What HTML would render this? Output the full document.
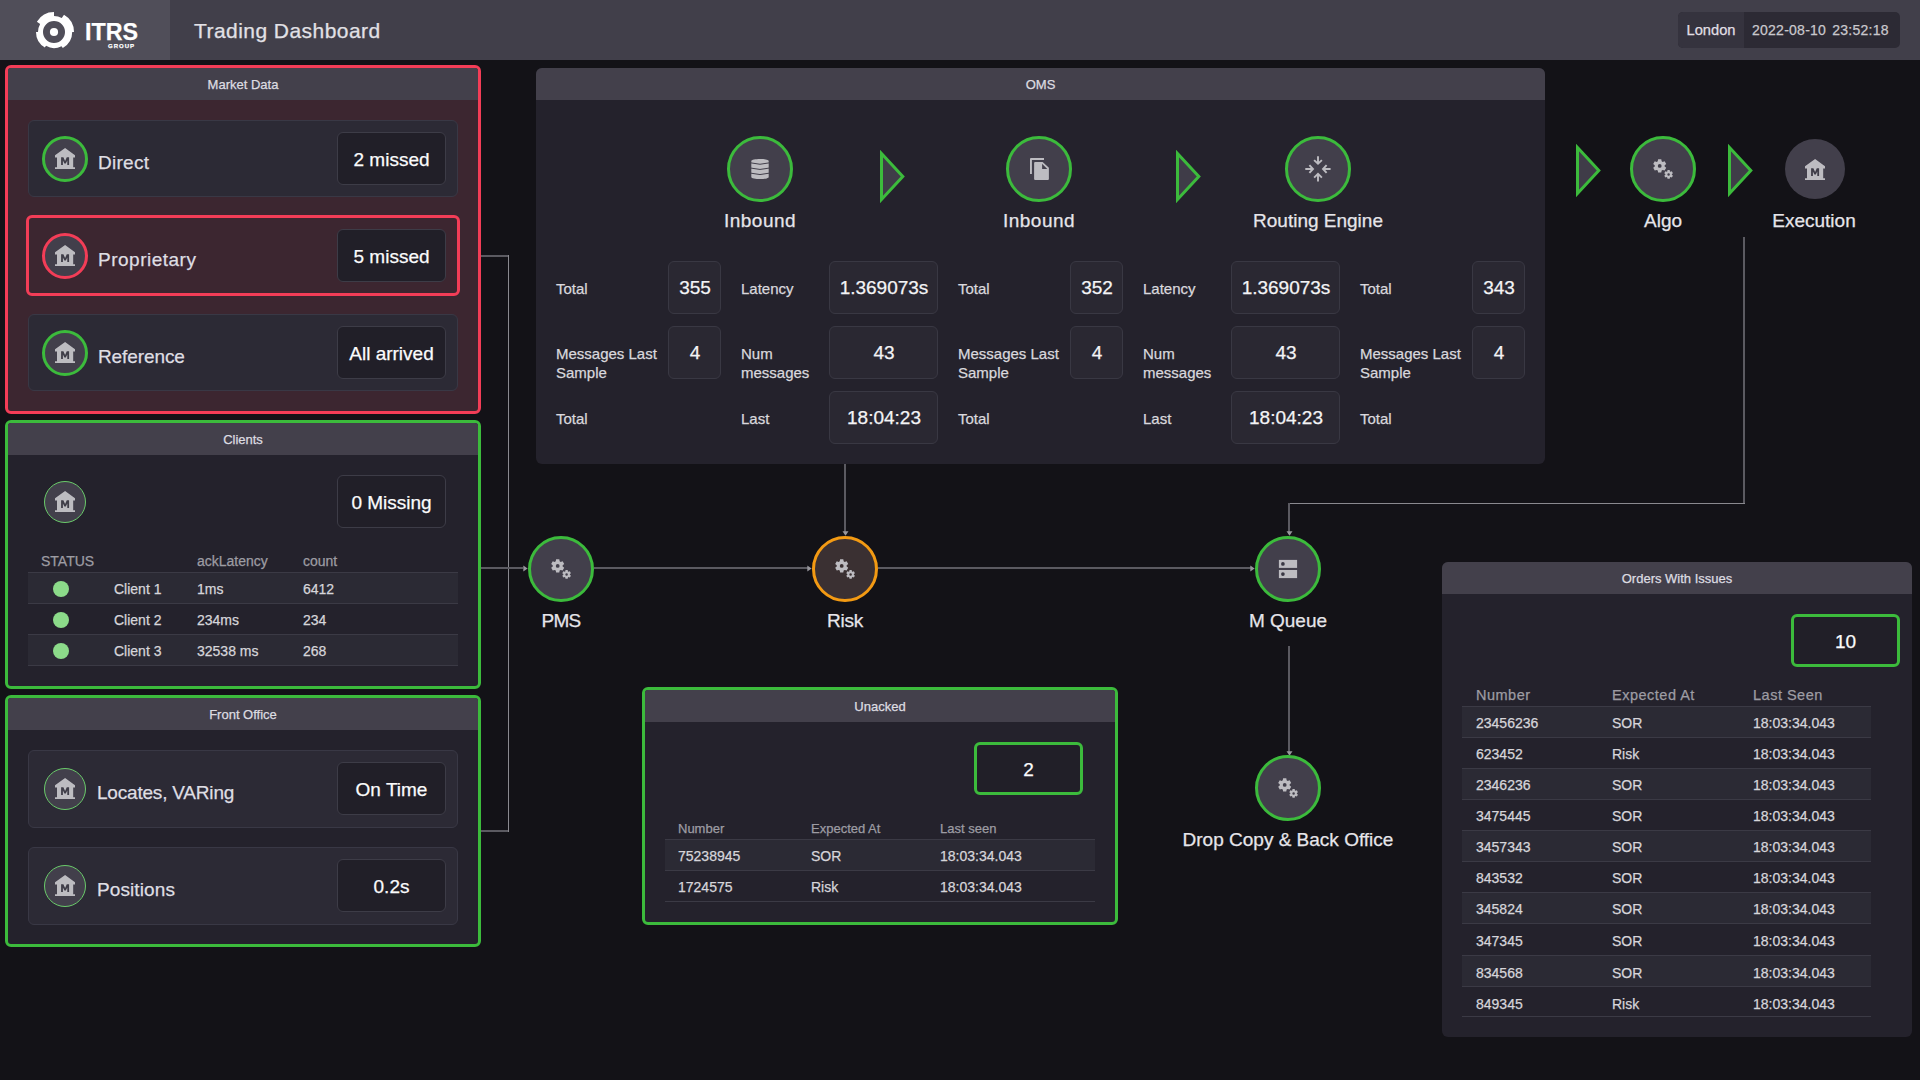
<!DOCTYPE html><html><head><meta charset="utf-8"><style>
*{box-sizing:border-box;margin:0;padding:0}
html,body{width:1920px;height:1080px;overflow:hidden;background:#131217;font-family:"Liberation Sans",sans-serif;color:#e4e3e8}
div{-webkit-text-stroke:0.25px currentColor}
.a{position:absolute}
.panel{position:absolute;border-radius:6px;overflow:hidden;background:#24222c}
.ph{position:absolute;left:0;right:0;top:0;height:32px;background:#43404b;font-size:13px;line-height:34px;text-align:center;color:#dddce1;white-space:nowrap}
.card{position:absolute;border-radius:6px;background:#2c2a35;border:1px solid #393845}
.vbox{position:absolute;padding-top:1px;border-radius:6px;background:#211f28;border:1px solid #3d3c47;font-size:19px;text-align:center;color:#fbfbfc;white-space:nowrap}
.circ{position:absolute;border-radius:50%;background:#423f4b}
.lbl{position:absolute;font-size:19px;color:#dfdee3;white-space:nowrap}
.nl{position:absolute;font-size:19px;color:#e6e5ea;white-space:nowrap;text-align:center}
.ln{position:absolute;background:#727178}
.ob{position:absolute;padding-left:1px;border-radius:6px;background:#2a2832;border:1px solid #393843;font-size:19px;text-align:center;color:#f4f4f6;white-space:nowrap;height:53px;line-height:51px}
.ol{position:absolute;font-size:15px;color:#d9d8dd;line-height:19px;white-space:nowrap}
.tr{position:absolute;border-bottom:1px solid #3b3a45}
.tt{position:absolute;font-size:15px;color:#d6d5da;white-space:nowrap}
.th{position:absolute;font-size:15px;color:#9d9ca3;white-space:nowrap}
</style></head><body>
<svg width="0" height="0" style="position:absolute"><defs>
<symbol id="bank" viewBox="0 0 20.2 21.1">
<path fill="#bdbcc1" d="M10.1 0 L20.2 7.3 L20.2 9.5 L18.2 9.5 L18.2 19.2 L20.2 19.2 L20.2 21.1 L0 21.1 L0 19.2 L2 19.2 L2 9.5 L0 9.5 L0 7.3 Z"/>
<path fill="#3f3d48" d="M6.1 17.1 V9.2 H8.4 L10.1 13.1 L11.8 9.2 H14.1 V17.1 H12.3 V12.4 L10.8 15.6 H9.4 L7.9 12.4 V17.1 Z"/>
</symbol>
<symbol id="gears" viewBox="0 0 32 32"><path fill-rule="evenodd" fill="#bdbcc1" d="M10.75 8.29 L11.11 6.29 L14.29 6.29 L14.65 8.29 L15.71 8.91 L17.63 8.22 L19.22 10.97 L17.66 12.28 L17.66 13.52 L19.22 14.83 L17.63 17.58 L15.71 16.89 L14.65 17.51 L14.29 19.51 L11.11 19.51 L10.75 17.51 L9.69 16.89 L7.77 17.58 L6.18 14.83 L7.74 13.52 L7.74 12.28 L6.18 10.97 L7.77 8.22 L9.69 8.91Z M14.60 12.90 A1.9 1.9 0 1 0 10.80 12.90 A1.9 1.9 0 1 0 14.60 12.90Z M20.26 18.38 L20.51 17.03 L22.69 17.03 L22.94 18.38 L23.55 18.73 L24.84 18.27 L25.93 20.16 L24.88 21.05 L24.88 21.75 L25.93 22.64 L24.84 24.53 L23.55 24.07 L22.94 24.42 L22.69 25.77 L20.51 25.77 L20.26 24.42 L19.65 24.07 L18.36 24.53 L17.27 22.64 L18.32 21.75 L18.32 21.05 L17.27 20.16 L18.36 18.27 L19.65 18.73Z M22.85 21.40 A1.25 1.25 0 1 0 20.35 21.40 A1.25 1.25 0 1 0 22.85 21.40Z"/></symbol>
<symbol id="db" viewBox="0 0 32 32">
<path fill="#bdbcc1" d="M7.3 8 C7.3 5.2 24.7 5.2 24.7 8 V24 C24.7 26.8 7.3 26.8 7.3 24 Z"/>
<g fill="none" stroke="#423f4b" stroke-width="1"><path d="M7 9.9 Q16 12.6 25 9.9"/><path d="M7 15.1 Q16 17.8 25 15.1"/><path d="M7 20.2 Q16 22.9 25 20.2"/></g>
</symbol>
<symbol id="copy" viewBox="0 0 32 32">
<path fill="#bdbcc1" d="M8 5 H21 V7 H8.9 V20.9 H7 V6 Q7 5 8 5Z"/>
<path fill="#bdbcc1" d="M12.1 9 H19.6 L25.9 14.8 V26 Q25.9 27 24.9 27 H12.1 Q11.1 27 11.1 26 V10 Q11.1 9 12.1 9Z"/>
<path fill="#423f4b" d="M19.1 10.8 V16 H24.3Z"/>
</symbol>
<symbol id="compress" viewBox="0 0 32 32">
<g fill="none" stroke="#bdbcc1" stroke-width="1.9" stroke-linecap="butt" stroke-linejoin="miter">
<path d="M16 3.3 V10.5 M12.1 7.1 L16 10.7 L19.9 7.1"/>
<path d="M16 28.4 V21 M12.1 24.6 L16 20.9 L19.9 24.6"/>
<path d="M3.3 16 H10.7 M7.4 12.1 L11 16 L7.4 19.9"/>
<path d="M28.6 16 H21 M24.6 12.1 L21 16 L24.6 19.9"/>
</g>
</symbol>
<symbol id="server" viewBox="0 0 32 32">
<g fill="#bdbcc1"><rect x="6.9" y="6.9" width="18.2" height="8"/><rect x="6.9" y="17" width="18.2" height="8.1"/></g>
<g fill="#3a3844"><circle cx="10.9" cy="10.9" r="1.85"/><circle cx="10.9" cy="21.1" r="1.85"/></g>
</symbol>
</defs></svg>
<div class="a" style="left:0;top:0;width:1920px;height:60px;background:#413f4a"></div>
<div class="a" style="left:0;top:0;width:170px;height:60px;background:#504e59"></div>
<svg class="a" style="left:32px;top:8px" width="46" height="44" viewBox="0 0 46 44">
<path fill="#ffffff" fill-rule="evenodd" d="M22.00 8.00 A16 16 0 0 1 29.76 10.01 L32.00 6.68 A20 20 0 0 1 42.00 24.00 L40.20 24.00 A18.2 18.2 0 0 1 30.82 39.92 L29.51 38.13 A16 16 0 0 1 14.00 37.86 L12.86 39.51 A18 18 0 0 1 4.00 24.00 L6.00 24.00 A16 16 0 0 1 8.14 16.00 L4.86 13.70 A20 20 0 0 1 22.00 4.00 Z M33.0 24.0 A11 11 0 1 0 11.0 24.0 A11 11 0 1 0 33.0 24.0Z"/>
<circle cx="22" cy="24" r="4.1" fill="#ffffff"/>
</svg>
<div class="a" style="left:85px;top:18px;font-size:24px;font-weight:bold;color:#fff;line-height:28px;transform:scaleX(0.97);transform-origin:0 0">ITRS</div>
<div class="a" style="left:108px;top:43px;font-size:6px;font-weight:bold;color:#fff;letter-spacing:1px;line-height:7px">GROUP</div>
<div class="a" style="left:194px;top:17px;font-size:21px;letter-spacing:0.45px;line-height:28px;color:#e2e1e6;white-space:nowrap">Trading Dashboard</div>
<div class="a" style="left:1678px;top:12px;width:222px;height:36px;border-radius:5px;background:#2c2a34;overflow:hidden"><div class="a" style="left:0;top:0;width:66px;height:36px;background:#35333e;font-size:14.7px;line-height:37px;text-align:center;color:#e0dfe4">London</div><div class="a" style="left:74px;top:0;font-size:14px;line-height:36px;color:#c9c8cd;white-space:nowrap;word-spacing:2px;letter-spacing:0.25px">2022-08-10 23:52:18</div></div>
<div class="panel" style="left:5px;top:65px;width:476px;height:349px;background:#3c2630;border:3px solid #f33d57;"><div class="ph" style="height:32px;line-height:34px">Market Data</div></div>
<div class="card" style="left:28px;top:120px;width:430px;height:77px;background:#2c2a35"></div>
<div class="circ" style="left:42.0px;top:136.0px;width:46px;height:46px;background:#423f4b;border:3px solid #3cbb3c;"></div>
<svg class="a" style="left:54.9px;top:148.14999999999998px" width="20.2" height="21.1" viewBox="0 0 20.2 21.1"><use href="#bank"/></svg>
<div class="lbl" style="left:98px;top:152px;line-height:22px;letter-spacing:0.28px">Direct</div>
<div class="vbox" style="left:337px;top:132px;width:109px;height:53px;line-height:51px;">2 missed</div>
<div class="card" style="left:26px;top:215px;width:434px;height:81px;border:3px solid #f33d57;background:#3c2630"></div>
<div class="circ" style="left:42.0px;top:233.0px;width:46px;height:46px;background:#423f4b;border:3px solid #f33d57;"></div>
<svg class="a" style="left:54.9px;top:245.14999999999998px" width="20.2" height="21.1" viewBox="0 0 20.2 21.1"><use href="#bank"/></svg>
<div class="lbl" style="left:98px;top:249px;line-height:22px;letter-spacing:0.5px">Proprietary</div>
<div class="vbox" style="left:337px;top:229px;width:109px;height:53px;line-height:51px;">5 missed</div>
<div class="card" style="left:28px;top:314px;width:430px;height:77px;background:#2c2a35"></div>
<div class="circ" style="left:42.0px;top:330.0px;width:46px;height:46px;background:#423f4b;border:3px solid #3cbb3c;"></div>
<svg class="a" style="left:54.9px;top:342.15px" width="20.2" height="21.1" viewBox="0 0 20.2 21.1"><use href="#bank"/></svg>
<div class="lbl" style="left:98px;top:346px;line-height:22px;letter-spacing:-0.1px">Reference</div>
<div class="vbox" style="left:337px;top:326px;width:109px;height:53px;line-height:51px;">All arrived</div>
<div class="panel" style="left:5px;top:420px;width:476px;height:269px;background:#24222c;border:3px solid #3cbb3c;"><div class="ph" style="height:32px;line-height:34px">Clients</div></div>
<div class="circ" style="left:44.0px;top:481.0px;width:42px;height:42px;background:#423f4b;border:1.5px solid #6acb6a;"></div>
<svg class="a" style="left:54.9px;top:491.15px" width="20.2" height="21.1" viewBox="0 0 20.2 21.1"><use href="#bank"/></svg>
<div class="vbox" style="left:337px;top:475px;width:109px;height:53px;line-height:51px;">0 Missing</div>
<div class="th" style="left:41px;top:553px;font-size:14px">STATUS</div>
<div class="th" style="left:197px;top:553px;font-size:14px">ackLatency</div>
<div class="th" style="left:303px;top:553px;font-size:14px">count</div>
<div class="a" style="left:28px;top:572px;width:430px;height:1px;background:#3b3a45"></div>
<div class="a" style="left:28px;top:573px;width:430px;height:30px;background:#2b2a34;border-bottom:1px solid #3b3a45;height:31px"></div>
<div class="a" style="left:53px;top:581px;width:16px;height:16px;border-radius:50%;background:#8cdb8a"></div>
<div class="tt" style="left:114px;top:581px;font-size:14px">Client 1</div>
<div class="tt" style="left:197px;top:581px;font-size:14px">1ms</div>
<div class="tt" style="left:303px;top:581px;font-size:14px">6412</div>
<div class="a" style="left:28px;top:604px;width:430px;height:30px;background:#24222c;border-bottom:1px solid #3b3a45;height:31px"></div>
<div class="a" style="left:53px;top:612px;width:16px;height:16px;border-radius:50%;background:#8cdb8a"></div>
<div class="tt" style="left:114px;top:612px;font-size:14px">Client 2</div>
<div class="tt" style="left:197px;top:612px;font-size:14px">234ms</div>
<div class="tt" style="left:303px;top:612px;font-size:14px">234</div>
<div class="a" style="left:28px;top:635px;width:430px;height:30px;background:#2b2a34;border-bottom:1px solid #3b3a45;height:31px"></div>
<div class="a" style="left:53px;top:643px;width:16px;height:16px;border-radius:50%;background:#8cdb8a"></div>
<div class="tt" style="left:114px;top:643px;font-size:14px">Client 3</div>
<div class="tt" style="left:197px;top:643px;font-size:14px">32538 ms</div>
<div class="tt" style="left:303px;top:643px;font-size:14px">268</div>
<div class="panel" style="left:5px;top:695px;width:476px;height:252px;background:#24222c;border:3px solid #3cbb3c;"><div class="ph" style="height:32px;line-height:34px">Front Office</div></div>
<div class="card" style="left:28px;top:750px;width:430px;height:78px;background:#2c2a35"></div>
<div class="circ" style="left:44.0px;top:768.0px;width:42px;height:42px;background:#423f4b;border:1.5px solid #6acb6a;"></div>
<svg class="a" style="left:54.9px;top:778.1500000000001px" width="20.2" height="21.1" viewBox="0 0 20.2 21.1"><use href="#bank"/></svg>
<div class="lbl" style="left:97px;top:782px;line-height:22px;letter-spacing:-0.2px">Locates, VARing</div>
<div class="vbox" style="left:337px;top:762px;width:109px;height:53px;line-height:51px;">On Time</div>
<div class="card" style="left:28px;top:847px;width:430px;height:78px;background:#2c2a35"></div>
<div class="circ" style="left:44.0px;top:865.0px;width:42px;height:42px;background:#423f4b;border:1.5px solid #6acb6a;"></div>
<svg class="a" style="left:54.9px;top:875.1500000000001px" width="20.2" height="21.1" viewBox="0 0 20.2 21.1"><use href="#bank"/></svg>
<div class="lbl" style="left:97px;top:879px;line-height:22px;letter-spacing:0.1px">Positions</div>
<div class="vbox" style="left:337px;top:859px;width:109px;height:53px;line-height:51px;">0.2s</div>
<div class="a" style="left:481px;top:255px;width:27px;height:2px;background:#5b5a61"></div>
<div class="a" style="left:508px;top:255px;width:1px;height:577px;background:#8a898f"></div>
<div class="a" style="left:481px;top:830px;width:27px;height:2px;background:#5b5a61"></div>
<div class="a" style="left:481px;top:567px;width:42px;height:2px;background:#5b5a61"></div>
<div class="panel" style="left:536px;top:68px;width:1009px;height:396px;background:#24222c"><div class="ph">OMS</div></div>
<div class="circ" style="left:727.0px;top:136.0px;width:66px;height:66px;background:#423f4b;border:3px solid #3cbb3c;"></div>
<svg class="a" style="left:744.0px;top:153.0px" width="32" height="32" viewBox="0 0 32 32"><use href="#db"/></svg>
<div class="nl" style="left:660px;top:209px;width:200px;line-height:24px;letter-spacing:0.5px">Inbound</div>
<svg class="a" style="left:880px;top:146px" width="27" height="60" viewBox="0 0 27 60"><path d="M1.5 7.6 L22.8 30.4 L1.5 53.4 Z" fill="#3f3c48" stroke="#3cbb3c" stroke-width="3" stroke-linejoin="miter" stroke-miterlimit="10"/></svg>
<div class="circ" style="left:1006.0px;top:136.0px;width:66px;height:66px;background:#423f4b;border:3px solid #3cbb3c;"></div>
<svg class="a" style="left:1023.0px;top:153.0px" width="32" height="32" viewBox="0 0 32 32"><use href="#copy"/></svg>
<div class="nl" style="left:939px;top:209px;width:200px;line-height:24px;letter-spacing:0.5px">Inbound</div>
<svg class="a" style="left:1176px;top:146px" width="27" height="60" viewBox="0 0 27 60"><path d="M1.5 7.6 L22.8 30.4 L1.5 53.4 Z" fill="#3f3c48" stroke="#3cbb3c" stroke-width="3" stroke-linejoin="miter" stroke-miterlimit="10"/></svg>
<div class="circ" style="left:1285.0px;top:136.0px;width:66px;height:66px;background:#423f4b;border:3px solid #3cbb3c;"></div>
<svg class="a" style="left:1302.0px;top:153.0px" width="32" height="32" viewBox="0 0 32 32"><use href="#compress"/></svg>
<div class="nl" style="left:1218px;top:209px;width:200px;line-height:24px">Routing Engine</div>
<svg class="a" style="left:1576px;top:140px" width="27" height="60" viewBox="0 0 27 60"><path d="M1.5 7.6 L22.8 30.4 L1.5 53.4 Z" fill="#3f3c48" stroke="#3cbb3c" stroke-width="3" stroke-linejoin="miter" stroke-miterlimit="10"/></svg>
<div class="circ" style="left:1630.0px;top:136.0px;width:66px;height:66px;background:#423f4b;border:3px solid #3cbb3c;"></div>
<svg class="a" style="left:1647.0px;top:153.0px" width="32" height="32" viewBox="0 0 32 32"><use href="#gears"/></svg>
<div class="nl" style="left:1563px;top:209px;width:200px;line-height:24px">Algo</div>
<svg class="a" style="left:1728px;top:140px" width="27" height="60" viewBox="0 0 27 60"><path d="M1.5 7.6 L22.8 30.4 L1.5 53.4 Z" fill="#3f3c48" stroke="#3cbb3c" stroke-width="3" stroke-linejoin="miter" stroke-miterlimit="10"/></svg>
<div class="circ" style="left:1785.0px;top:139.0px;width:60px;height:60px;background:#423f4b;"></div>
<svg class="a" style="left:1804.9px;top:158.89999999999998px" width="20.2" height="21.1" viewBox="0 0 20.2 21.1"><use href="#bank"/></svg>
<div class="nl" style="left:1714px;top:209px;width:200px;line-height:24px">Execution</div>
<div class="ol" style="left:556px;top:279px">Total</div>
<div class="ob" style="left:668px;top:261px;width:53px">355</div>
<div class="ol" style="left:556px;top:344px">Messages Last<br>Sample</div>
<div class="ob" style="left:668px;top:326px;width:53px">4</div>
<div class="ol" style="left:556px;top:409px">Total</div>
<div class="ol" style="left:741px;top:279px">Latency</div>
<div class="ob" style="left:829px;top:261px;width:109px">1.369073s</div>
<div class="ol" style="left:741px;top:344px">Num<br>messages</div>
<div class="ob" style="left:829px;top:326px;width:109px">43</div>
<div class="ol" style="left:741px;top:409px">Last</div>
<div class="ob" style="left:829px;top:391px;width:109px">18:04:23</div>
<div class="ol" style="left:958px;top:279px">Total</div>
<div class="ob" style="left:1070px;top:261px;width:53px">352</div>
<div class="ol" style="left:958px;top:344px">Messages Last<br>Sample</div>
<div class="ob" style="left:1070px;top:326px;width:53px">4</div>
<div class="ol" style="left:958px;top:409px">Total</div>
<div class="ol" style="left:1143px;top:279px">Latency</div>
<div class="ob" style="left:1231px;top:261px;width:109px">1.369073s</div>
<div class="ol" style="left:1143px;top:344px">Num<br>messages</div>
<div class="ob" style="left:1231px;top:326px;width:109px">43</div>
<div class="ol" style="left:1143px;top:409px">Last</div>
<div class="ob" style="left:1231px;top:391px;width:109px">18:04:23</div>
<div class="ol" style="left:1360px;top:279px">Total</div>
<div class="ob" style="left:1472px;top:261px;width:53px">343</div>
<div class="ol" style="left:1360px;top:344px">Messages Last<br>Sample</div>
<div class="ob" style="left:1472px;top:326px;width:53px">4</div>
<div class="ol" style="left:1360px;top:409px">Total</div>
<div class="a" style="left:844px;top:464px;width:2px;height:68px;background:#5b5a61"></div>
<div class="a" style="left:594px;top:567px;width:214px;height:2px;background:#5b5a61"></div>
<div class="a" style="left:878px;top:567px;width:373px;height:2px;background:#5b5a61"></div>
<div class="a" style="left:1743px;top:237px;width:2px;height:266px;background:#5b5a61"></div>
<div class="a" style="left:1288px;top:503px;width:457px;height:1px;background:#8a898f"></div>
<div class="a" style="left:1288px;top:503px;width:2px;height:31px;background:#5b5a61"></div>
<div class="a" style="left:1288px;top:646px;width:2px;height:106px;background:#5b5a61"></div>
<svg class="a" style="left:523px;top:564.5px" width="5" height="7" viewBox="0 0 5 7"><path d="M0.3 0.5L4.7 3.5L0.3 6.5Z" fill="#98979d"/></svg>
<svg class="a" style="left:807px;top:564.5px" width="5" height="7" viewBox="0 0 5 7"><path d="M0.3 0.5L4.7 3.5L0.3 6.5Z" fill="#98979d"/></svg>
<svg class="a" style="left:1250px;top:564.5px" width="5" height="7" viewBox="0 0 5 7"><path d="M0.3 0.5L4.7 3.5L0.3 6.5Z" fill="#98979d"/></svg>
<svg class="a" style="left:841.5px;top:531px" width="7" height="5" viewBox="0 0 7 5"><path d="M0.5 0.3L6.5 0.3L3.5 4.7Z" fill="#98979d"/></svg>
<svg class="a" style="left:1285.5px;top:531px" width="7" height="5" viewBox="0 0 7 5"><path d="M0.5 0.3L6.5 0.3L3.5 4.7Z" fill="#98979d"/></svg>
<svg class="a" style="left:1285.5px;top:751px" width="7" height="5" viewBox="0 0 7 5"><path d="M0.5 0.3L6.5 0.3L3.5 4.7Z" fill="#98979d"/></svg>
<div class="circ" style="left:528.0px;top:536.0px;width:66px;height:66px;background:#423f4b;border:3px solid #3cbb3c;"></div>
<svg class="a" style="left:545.0px;top:553.0px" width="32" height="32" viewBox="0 0 32 32"><use href="#gears"/></svg>
<div class="nl" style="left:461px;top:608.5px;width:200px;line-height:24px;letter-spacing:-0.7px">PMS</div>
<div class="circ" style="left:812.0px;top:536.0px;width:66px;height:66px;background:#3a3032;border:3px solid #f39a13;"></div>
<svg class="a" style="left:829.0px;top:553.0px" width="32" height="32" viewBox="0 0 32 32"><use href="#gears"/></svg>
<div class="nl" style="left:745px;top:608.5px;width:200px;line-height:24px;letter-spacing:-0.27px">Risk</div>
<div class="circ" style="left:1255.0px;top:536.0px;width:66px;height:66px;background:#423f4b;border:3px solid #3cbb3c;"></div>
<svg class="a" style="left:1272.0px;top:553.0px" width="32" height="32" viewBox="0 0 32 32"><use href="#server"/></svg>
<div class="nl" style="left:1188px;top:608.5px;width:200px;line-height:24px">M Queue</div>
<div class="circ" style="left:1255.0px;top:755.0px;width:66px;height:66px;background:#423f4b;border:3px solid #3cbb3c;"></div>
<svg class="a" style="left:1272.0px;top:772.0px" width="32" height="32" viewBox="0 0 32 32"><use href="#gears"/></svg>
<div class="nl" style="left:1138px;top:827.5px;width:300px;line-height:24px">Drop Copy &amp; Back Office</div>
<div class="panel" style="left:642px;top:687px;width:476px;height:238px;background:#24222c;border:3px solid #3cbb3c;"><div class="ph" style="height:32px;line-height:34px">Unacked</div></div>
<div class="vbox" style="left:974px;top:742px;width:109px;height:53px;line-height:47px;border:3px solid #3cbb3c;">2</div>
<div class="th" style="left:678px;top:821px;font-size:13px">Number</div>
<div class="th" style="left:811px;top:821px;font-size:13px">Expected At</div>
<div class="th" style="left:940px;top:821px;font-size:13px">Last seen</div>
<div class="a" style="left:665px;top:839px;width:430px;height:1px;background:#3b3a45"></div>
<div class="a" style="left:665px;top:840px;width:430px;height:31px;background:#2b2a34;border-bottom:1px solid #3b3a45"></div>
<div class="tt" style="left:678px;top:848px;font-size:14px">75238945</div>
<div class="tt" style="left:811px;top:848px;font-size:14px">SOR</div>
<div class="tt" style="left:940px;top:848px;font-size:14px">18:03:34.043</div>
<div class="a" style="left:665px;top:871px;width:430px;height:31px;background:#24222c;border-bottom:1px solid #3b3a45"></div>
<div class="tt" style="left:678px;top:879px;font-size:14px">1724575</div>
<div class="tt" style="left:811px;top:879px;font-size:14px">Risk</div>
<div class="tt" style="left:940px;top:879px;font-size:14px">18:03:34.043</div>
<div class="panel" style="left:1442px;top:562px;width:470px;height:475px;background:#24222c"><div class="ph">Orders With Issues</div></div>
<div class="vbox" style="left:1791px;top:614px;width:109px;height:53px;line-height:47px;border:3px solid #3cbb3c;">10</div>
<div class="th" style="left:1476px;top:687px;font-size:14.5px;letter-spacing:0.5px">Number</div>
<div class="th" style="left:1612px;top:687px;font-size:14.5px;letter-spacing:0.5px">Expected At</div>
<div class="th" style="left:1753px;top:687px;font-size:14.5px;letter-spacing:0.5px">Last Seen</div>
<div class="a" style="left:1462px;top:706px;width:409px;height:1px;background:#3b3a45"></div>
<div class="a" style="left:1462px;top:707px;width:409px;height:31px;background:#2b2a34;border-bottom:1px solid #3b3a45"></div>
<div class="tt" style="left:1476px;top:715px;font-size:14px">23456236</div>
<div class="tt" style="left:1612px;top:715px;font-size:14px">SOR</div>
<div class="tt" style="left:1753px;top:715px;font-size:14px">18:03:34.043</div>
<div class="a" style="left:1462px;top:738px;width:409px;height:31px;background:#24222c;border-bottom:1px solid #3b3a45"></div>
<div class="tt" style="left:1476px;top:746px;font-size:14px">623452</div>
<div class="tt" style="left:1612px;top:746px;font-size:14px">Risk</div>
<div class="tt" style="left:1753px;top:746px;font-size:14px">18:03:34.043</div>
<div class="a" style="left:1462px;top:769px;width:409px;height:31px;background:#2b2a34;border-bottom:1px solid #3b3a45"></div>
<div class="tt" style="left:1476px;top:777px;font-size:14px">2346236</div>
<div class="tt" style="left:1612px;top:777px;font-size:14px">SOR</div>
<div class="tt" style="left:1753px;top:777px;font-size:14px">18:03:34.043</div>
<div class="a" style="left:1462px;top:800px;width:409px;height:31px;background:#24222c;border-bottom:1px solid #3b3a45"></div>
<div class="tt" style="left:1476px;top:808px;font-size:14px">3475445</div>
<div class="tt" style="left:1612px;top:808px;font-size:14px">SOR</div>
<div class="tt" style="left:1753px;top:808px;font-size:14px">18:03:34.043</div>
<div class="a" style="left:1462px;top:831px;width:409px;height:31px;background:#2b2a34;border-bottom:1px solid #3b3a45"></div>
<div class="tt" style="left:1476px;top:839px;font-size:14px">3457343</div>
<div class="tt" style="left:1612px;top:839px;font-size:14px">SOR</div>
<div class="tt" style="left:1753px;top:839px;font-size:14px">18:03:34.043</div>
<div class="a" style="left:1462px;top:862px;width:409px;height:31px;background:#24222c;border-bottom:1px solid #3b3a45"></div>
<div class="tt" style="left:1476px;top:870px;font-size:14px">843532</div>
<div class="tt" style="left:1612px;top:870px;font-size:14px">SOR</div>
<div class="tt" style="left:1753px;top:870px;font-size:14px">18:03:34.043</div>
<div class="a" style="left:1462px;top:893px;width:409px;height:31px;background:#2b2a34;border-bottom:1px solid #3b3a45"></div>
<div class="tt" style="left:1476px;top:901px;font-size:14px">345824</div>
<div class="tt" style="left:1612px;top:901px;font-size:14px">SOR</div>
<div class="tt" style="left:1753px;top:901px;font-size:14px">18:03:34.043</div>
<div class="a" style="left:1462px;top:924px;width:409px;height:32px;background:#24222c;border-bottom:1px solid #3b3a45"></div>
<div class="tt" style="left:1476px;top:933px;font-size:14px">347345</div>
<div class="tt" style="left:1612px;top:933px;font-size:14px">SOR</div>
<div class="tt" style="left:1753px;top:933px;font-size:14px">18:03:34.043</div>
<div class="a" style="left:1462px;top:956px;width:409px;height:31px;background:#2b2a34;border-bottom:1px solid #3b3a45"></div>
<div class="tt" style="left:1476px;top:965px;font-size:14px">834568</div>
<div class="tt" style="left:1612px;top:965px;font-size:14px">SOR</div>
<div class="tt" style="left:1753px;top:965px;font-size:14px">18:03:34.043</div>
<div class="a" style="left:1462px;top:987px;width:409px;height:30px;background:#24222c;border-bottom:1px solid #3b3a45"></div>
<div class="tt" style="left:1476px;top:995.5px;font-size:14px">849345</div>
<div class="tt" style="left:1612px;top:995.5px;font-size:14px">Risk</div>
<div class="tt" style="left:1753px;top:995.5px;font-size:14px">18:03:34.043</div>
</body></html>
